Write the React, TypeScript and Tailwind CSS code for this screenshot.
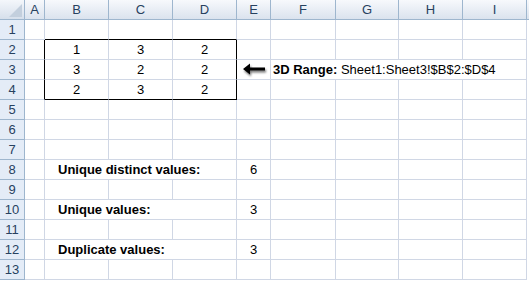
import React from "react";

const cols = [
  { key: "A", w: "w-[20px]" },
  { key: "B", w: "w-[64px]" },
  { key: "C", w: "w-[64px]" },
  { key: "D", w: "w-[64px]" },
  { key: "E", w: "w-[34px]" },
  { key: "F", w: "w-[65px]" },
  { key: "G", w: "w-[63px]" },
  { key: "H", w: "w-[64px]" },
  { key: "I", w: "w-[64px]" },
];

const grid = [
  ["", "1", "3", "2"],
  ["", "3", "2", "2"],
  ["", "2", "3", "2"],
];

const labels: Record<number, [string, string]> = {
  8: ["Unique distinct values:", "6"],
  10: ["Unique values:", "3"],
  12: ["Duplicate values:", "3"],
};

const cell = "h-[20px] shrink-0 border-r border-b border-[#d0d7e5] flex items-center";

const LeftArrow = () => (
  <svg width="28" height="18" viewBox="0 0 28 18">
    <defs>
      <filter id="sh" x="-30%" y="-30%" width="160%" height="160%">
        <feGaussianBlur stdDeviation="1.2" />
      </filter>
    </defs>
    <g filter="url(#sh)" opacity="0.55" transform="translate(1,2)">
      <path d="M3 8 L10 2.5 L10 6.5 L25 6.5 L25 9.5 L10 9.5 L10 13.5 Z" fill="#000" />
    </g>
    <path d="M3 8 L10 2.5 L10 6.5 L25 6.5 L25 9.5 L10 9.5 L10 13.5 Z" fill="#000" />
  </svg>
);

function Row({ n }: { n: number }) {
  const label = labels[n];
  const inBox = n >= 2 && n <= 4;
  return (
    <div className="flex">
      <div className="w-[25px] h-[20px] shrink-0 bg-[#e4ecf7] border-r border-b border-[#9eb6ce] flex items-center justify-center text-[13px] text-[#27415f]">
        {n}
      </div>
      {label ? (
        <>
          <div className={`${cell} w-[20px]`} />
          <div className={`${cell} w-[192px] pl-[13px] font-bold`}>{label[0]}</div>
          <div className={`${cell} w-[34px] justify-center`}>{label[1]}</div>
          <div className={`${cell} w-[65px]`} />
          <div className={`${cell} w-[63px]`} />
          <div className={`${cell} w-[64px]`} />
          <div className={`${cell} w-[64px]`} />
        </>
      ) : n === 3 ? (
        <>
          <div className={`${cell} w-[20px] border-r-black`} />
          {grid[1].slice(1).map((v, i) => (
            <div
              key={i}
              className={`${cell} w-[64px] justify-center ${i === 2 ? "border-r-black" : ""}`}
            >
              {v}
            </div>
          ))}
          <div className={`${cell} w-[34px] justify-center pt-[1px]`}>
            <LeftArrow />
          </div>
          <div className={`${cell} w-[256px] pl-[2px] whitespace-nowrap`}>
            <span className="font-bold">3D Range:</span>&nbsp;Sheet1:Sheet3!$B$2:$D$4
          </div>
        </>
      ) : (
        cols.map((c, i) => {
          let extra = "";
          if (inBox && i === 0) extra += " border-r-black";
          if (inBox && i === 3) extra += " border-r-black";
          if ((n === 1 || n === 4) && i >= 1 && i <= 3) extra += " border-b-black";
          const v = inBox && i >= 1 && i <= 3 ? grid[n - 2][i] : "";
          return (
            <div key={c.key} className={`${cell} ${c.w} justify-center${extra}`}>
              {v}
            </div>
          );
        })
      )}
    </div>
  );
}

export default function App() {
  return (
    <div
      className="w-[529px] h-[281px] bg-white overflow-hidden text-[13px] text-black"
      style={{ fontFamily: '"Liberation Sans", Arial, sans-serif' }}
    >
      <div className="flex">
        <div className="w-[25px] h-[20px] shrink-0 bg-gradient-to-b from-[#f4f7fb] to-[#d6dfeb] border-r border-b border-[#9eb6ce] relative">
          <svg className="absolute left-0 top-0" width="24" height="19" viewBox="0 0 24 19">
            <path d="M9 17 L22 17 L22 4 Z" fill="#c3cfdd" />
          </svg>
        </div>
        {cols.map((c) => (
          <div
            key={c.key}
            className={`${c.w} h-[20px] shrink-0 bg-gradient-to-b from-[#f7f9fc] to-[#dbe3ee] border-r border-b border-[#9eb6ce] flex items-center justify-center text-[13px] text-[#27415f]`}
          >
            {c.key}
          </div>
        ))}
        <div className="w-[10px] h-[20px] shrink-0 bg-gradient-to-b from-[#f7f9fc] to-[#dbe3ee] border-b border-[#9eb6ce]" />
      </div>
      {Array.from({ length: 13 }, (_, i) => (
        <Row key={i} n={i + 1} />
      ))}
    </div>
  );
}
